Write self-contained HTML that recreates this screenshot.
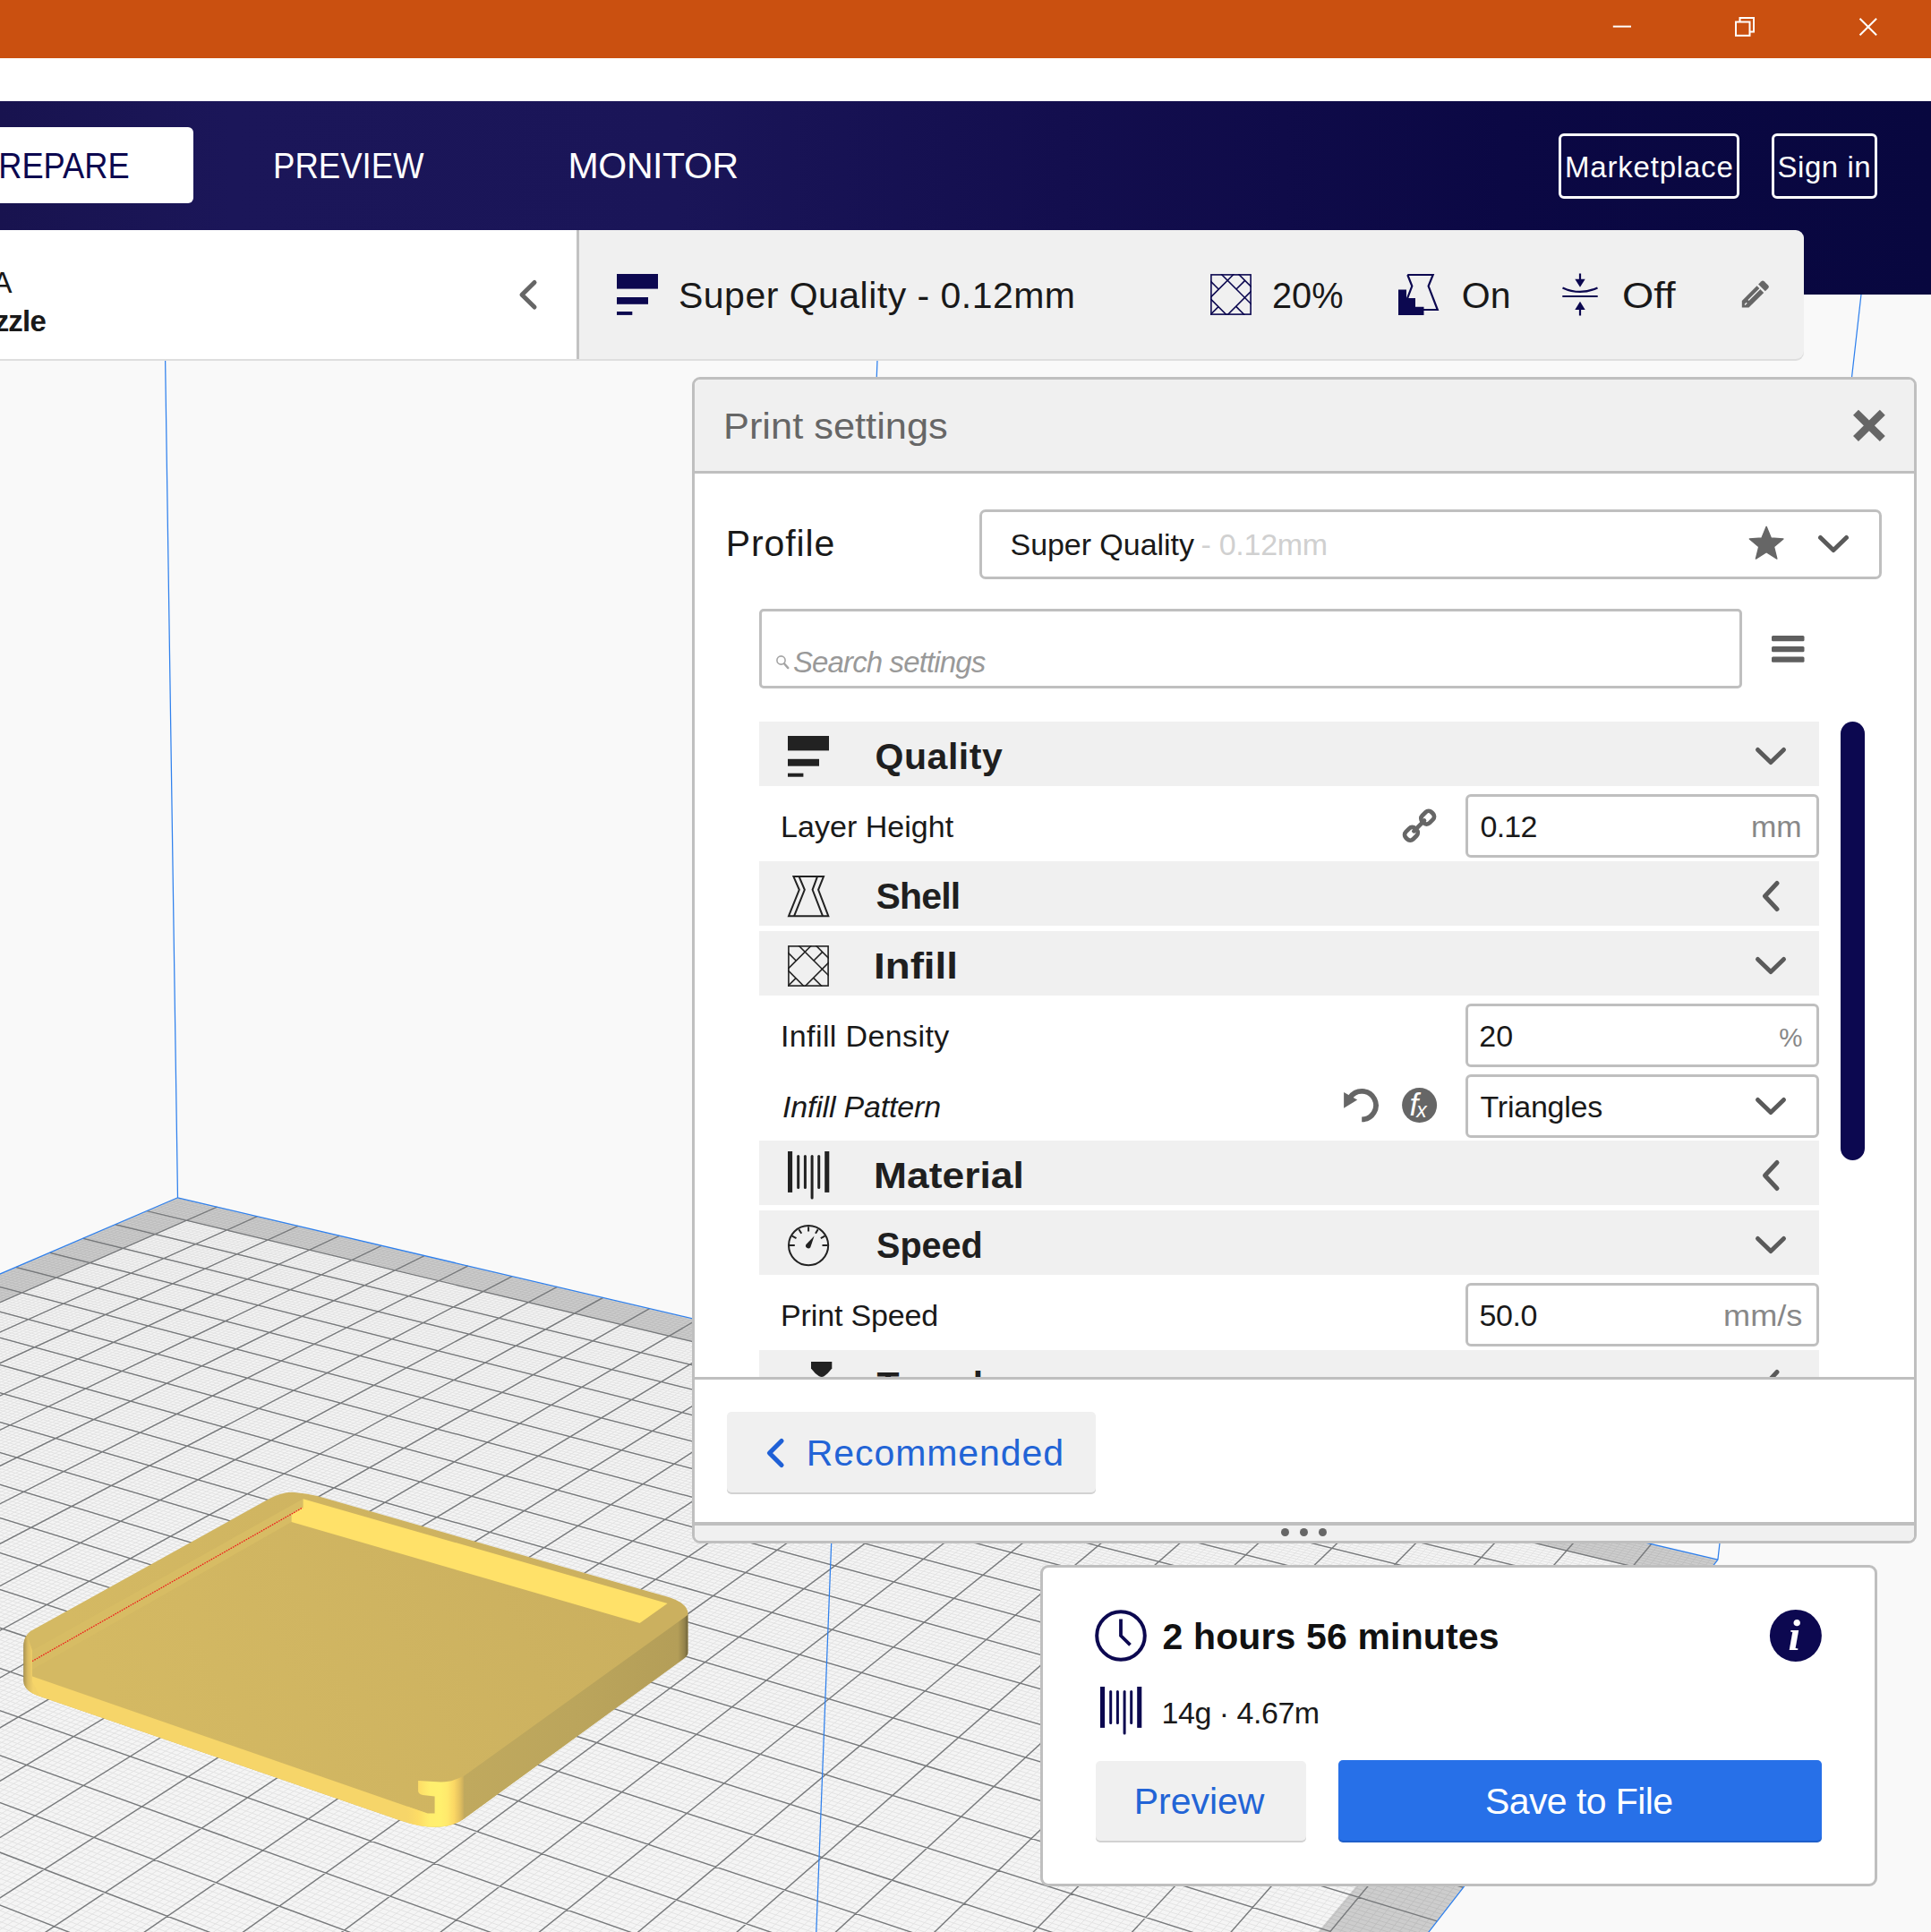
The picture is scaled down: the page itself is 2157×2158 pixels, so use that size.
<!DOCTYPE html>
<html><head><meta charset="utf-8"><title>Cura</title>
<style>html,body{margin:0;padding:0}body{width:2157px;height:2158px;position:relative;overflow:hidden;background:#f9f9f9;font-family:"Liberation Sans",sans-serif}svg{display:block;overflow:visible}</style></head>
<body>
<svg id="scene" width="2157" height="2158" viewBox="0 0 2157 2158" style="position:absolute;left:0;top:0">
<rect x="0" y="0" width="2157" height="2158" fill="#f9f9f9"/>
<polygon points="198.5,1337.8 1918.9,1742.1 873.5,3088.4 -1342,1999.5" fill="#f5f5f5"/>
<path d="M202.9 1338.8L-5 1428.4M195.1 1339.3L1916.9 1744.7M207.3 1339.9L-5 1431.5M191.7 1340.8L1915 1747.2M211.7 1340.9L-5 1434.6M188.3 1342.2L1913 1749.7M216.1 1341.9L-5 1437.8M184.8 1343.7L1911 1752.3M220.5 1343L-5 1440.9M181.4 1345.2L1909 1754.8M224.9 1344L-5 1444.1M177.9 1346.7L1907 1757.4M229.3 1345.1L-5 1447.3M174.5 1348.2L1905.1 1759.9M233.8 1346.1L-5 1450.5M171 1349.7L1903.1 1762.5M238.2 1347.1L-5 1453.7M167.5 1351.1L1901.1 1765.1M247.1 1349.2L-5 1460.2M160.5 1354.1L1897 1770.3M251.5 1350.3L-5 1463.5M157 1355.7L1895 1772.9M256 1351.3L-5 1466.8M153.5 1357.2L1893 1775.5M260.5 1352.4L-5 1470.1M150 1358.7L1891 1778.1M265 1353.4L-5 1473.4M146.5 1360.2L1888.9 1780.7M269.4 1354.5L-5 1476.7M142.9 1361.7L1886.9 1783.3M273.9 1355.5L-5 1480M139.4 1363.2L1884.8 1786M278.4 1356.6L-5 1483.4M135.9 1364.7L1882.8 1788.6M282.9 1357.7L-5 1486.8M132.3 1366.3L1880.7 1791.3M292 1359.8L-5 1493.6M125.2 1369.3L1876.6 1796.6M296.5 1360.8L-5 1497M121.6 1370.9L1874.5 1799.3M301 1361.9L-5 1500.4M118 1372.4L1872.4 1802M305.6 1363L-5 1503.9M114.4 1374L1870.3 1804.7M310.1 1364L-5 1507.3M110.8 1375.5L1868.2 1807.4M314.7 1365.1L-5 1510.8M107.2 1377.1L1866.1 1810.1M319.2 1366.2L-5 1514.3M103.5 1378.6L1864 1812.8M323.8 1367.3L-5 1517.8M99.9 1380.2L1861.9 1815.6M328.4 1368.3L-5 1521.4M96.3 1381.8L1859.7 1818.3M337.6 1370.5L-5 1528.5M89 1384.9L1855.5 1823.8M342.2 1371.6L-5 1532.1M85.3 1386.5L1853.3 1826.6M346.8 1372.7L-5 1535.7M81.6 1388L1851.2 1829.3M351.4 1373.7L-5 1539.3M77.9 1389.6L1849 1832.1M356 1374.8L-5 1542.9M74.2 1391.2L1846.8 1834.9M360.6 1375.9L-5 1546.6M70.5 1392.8L1844.7 1837.7M365.3 1377L-5 1550.3M66.8 1394.4L1842.5 1840.5M369.9 1378.1L-5 1554M63.1 1396L1840.3 1843.3M374.6 1379.2L-5 1557.7M59.4 1397.6L1838.1 1846.1M383.9 1381.4L-5 1565.1M51.9 1400.8L1833.7 1851.8M388.6 1382.5L-5 1568.9M48.2 1402.4L1831.5 1854.7M393.3 1383.6L-5 1572.7M44.4 1404L1829.3 1857.5M398 1384.7L-5 1576.5M40.6 1405.7L1827 1860.4M402.7 1385.8L-5 1580.3M36.8 1407.3L1824.8 1863.3M407.4 1386.9L-5 1584.1M33.1 1408.9L1822.6 1866.2M412.1 1388L-5 1588M29.3 1410.5L1820.3 1869.1M416.8 1389.1L-5 1591.9M25.4 1412.2L1818.1 1872M421.5 1390.2L-5 1595.8M21.6 1413.8L1815.8 1874.9M431 1392.5L-5 1603.6M14 1417.1L1811.3 1880.7M435.8 1393.6L-5 1607.6M10.1 1418.8L1809 1883.7M440.5 1394.7L-5 1611.6M6.3 1420.4L1806.7 1886.6M445.3 1395.8L-5 1615.5M2.4 1422.1L1804.4 1889.6M450.1 1396.9L-5 1619.6M-1.5 1423.7L1802.1 1892.6M454.9 1398.1L-5 1623.6M-5 1425.5L1799.8 1895.5M459.7 1399.2L-5 1627.7M-5 1428.2L1797.4 1898.5M464.5 1400.3L-5 1631.7M-5 1430.9L1795.1 1901.5M469.3 1401.4L-5 1635.8M-5 1433.6L1792.8 1904.5M478.9 1403.7L-5 1644.1M-5 1439L1788.1 1910.6M483.7 1404.8L-5 1648.2M-5 1441.7L1785.7 1913.6M488.6 1406L-5 1652.4M-5 1444.5L1783.4 1916.7M493.4 1407.1L-5 1656.6M-5 1447.3L1781 1919.7M498.3 1408.3L-5 1660.9M-5 1450L1778.6 1922.8M503.2 1409.4L-5 1665.1M-5 1452.8L1776.2 1925.9M508 1410.6L-5 1669.4M-5 1455.6L1773.8 1928.9M512.9 1411.7L-5 1673.7M-5 1458.4L1771.4 1932M517.8 1412.9L-5 1678M-5 1461.2L1769 1935.2M527.6 1415.2L-5 1686.7M-5 1466.9L1764.2 1941.4M532.5 1416.3L-5 1691.1M-5 1469.7L1761.7 1944.5M537.4 1417.5L-5 1695.5M-5 1472.6L1759.3 1947.7M542.4 1418.6L-5 1699.9M-5 1475.4L1756.8 1950.8M547.3 1419.8L-5 1704.4M-5 1478.3L1754.4 1954M552.3 1421L-5 1708.8M-5 1481.2L1751.9 1957.2M557.2 1422.1L-5 1713.3M-5 1484.1L1749.4 1960.4M562.2 1423.3L-5 1717.9M-5 1487L1746.9 1963.6M567.1 1424.5L-5 1722.4M-5 1490L1744.4 1966.8M577.1 1426.8L-5 1731.6M-5 1495.9L1739.4 1973.2M582.1 1428L-5 1736.2M-5 1498.8L1736.9 1976.5M587.1 1429.1L-5 1740.9M-5 1501.8L1734.4 1979.7M592.1 1430.3L-5 1745.6M-5 1504.8L1731.8 1983M597.2 1431.5L-5 1750.3M-5 1507.8L1729.3 1986.3M602.2 1432.7L-5 1755M-5 1510.8L1726.8 1989.6M607.2 1433.9L-5 1759.7M-5 1513.8L1724.2 1992.9M612.3 1435.1L-5 1764.5M-5 1516.9L1721.6 1996.2M617.3 1436.2L-5 1769.3M-5 1519.9L1719 1999.5M627.5 1438.6L-5 1779M-5 1526L1713.9 2006.2M632.6 1439.8L-5 1783.9M-5 1529.1L1711.3 2009.5M637.6 1441L-5 1788.8M-5 1532.2L1708.6 2012.9M642.7 1442.2L-5 1793.8M-5 1535.3L1706 2016.3M647.9 1443.4L-5 1798.7M-5 1538.5L1703.4 2019.6M653 1444.6L-5 1803.7M-5 1541.6L1700.8 2023M658.1 1445.8L-5 1808.8M-5 1544.8L1698.1 2026.5M663.2 1447L-5 1813.8M-5 1547.9L1695.5 2029.9M668.4 1448.2L-5 1818.9M-5 1551.1L1692.8 2033.3M678.7 1450.7L-5 1829.2M-5 1557.5L1687.4 2040.2M683.9 1451.9L-5 1834.3M-5 1560.7L1684.7 2043.7M689 1453.1L-5 1839.5M-5 1563.9L1682 2047.2M694.2 1454.3L-5 1844.8M-5 1567.2L1679.3 2050.7M699.4 1455.5L-5 1850M-5 1570.4L1676.6 2054.2M704.6 1456.8L-5 1855.3M-5 1573.7L1673.9 2057.7M709.9 1458L-5 1860.6M-5 1577L1671.1 2061.2M715.1 1459.2L-5 1866M-5 1580.3L1668.4 2064.8M720.3 1460.5L-5 1871.4M-5 1583.6L1665.6 2068.3M730.8 1462.9L-5 1882.3M-5 1590.3L1660.1 2075.5M736.1 1464.2L-5 1887.7M-5 1593.7L1657.3 2079.1M741.3 1465.4L-5 1893.2M-5 1597L1654.5 2082.7M746.6 1466.6L-5 1898.8M-5 1600.4L1651.7 2086.3M751.9 1467.9L-5 1904.4M-5 1603.8L1648.8 2089.9M757.2 1469.1L-5 1910M-5 1607.2L1646 2093.5M762.5 1470.4L-5 1915.6M-5 1610.7L1643.2 2097.2M767.8 1471.6L-5 1921.3M-5 1614.1L1640.3 2100.9M773.2 1472.9L-5 1927M-5 1617.6L1637.5 2104.6M783.8 1475.4L-5 1938.6M-5 1624.5L1631.7 2112M789.2 1476.6L-5 1944.4M-5 1628L1628.8 2115.7M794.6 1477.9L-5 1950.3M-5 1631.6L1625.9 2119.4M799.9 1479.2L-5 1956.1M-5 1635.1L1623 2123.2M805.3 1480.4L-5 1962.1M-5 1638.7L1620.1 2126.9M810.7 1481.7L-5 1968M-5 1642.2L1617.2 2130.7M816.1 1483L-5 1974M-5 1645.8L1614.2 2134.5M821.5 1484.2L-5 1980.1M-5 1649.4L1611.3 2138.3M826.9 1485.5L-5 1986.2M-5 1653L1608.3 2142.1M837.8 1488.1L-5 1998.4M-5 1660.3L1602.3 2149.8M843.2 1489.3L-5 2004.6M-5 1664L1599.3 2153.6M848.7 1490.6L-5 2010.9M-5 1667.7L1596.3 2157.5M854.2 1491.9L-5 2017.1M-5 1671.4L1593.3 2161.4M859.6 1493.2L-5 2023.4M-5 1675.1L1582.8 2163M865.1 1494.5L-5 2029.8M-5 1678.8L1567.1 2163M870.6 1495.8L-5 2036.2M-5 1682.6L1551.3 2163M876.1 1497.1L-5 2042.6M-5 1686.3L1535.6 2163M881.7 1498.4L-5 2049.1M-5 1690.1L1519.9 2163M892.7 1501L-5 2062.2M-5 1697.7L1488.4 2163M898.3 1502.3L-5 2068.8M-5 1701.6L1472.7 2163M903.8 1503.6L-5 2075.4M-5 1705.4L1456.9 2163M909.4 1504.9L-5 2082.1M-5 1709.3L1441.2 2163M915 1506.2L-5 2088.8M-5 1713.2L1425.5 2163M920.5 1507.5L-5 2095.6M-5 1717.1L1409.7 2163M926.1 1508.8L-5 2102.4M-5 1721L1394 2163M931.7 1510.1L-5 2109.3M-5 1725L1378.3 2163M937.4 1511.5L-5 2116.2M-5 1728.9L1362.6 2163M948.6 1514.1L-5 2130.2M-5 1736.9L1331.1 2163M954.3 1515.4L-5 2137.2M-5 1741L1315.4 2163M959.9 1516.8L-5 2144.3M-5 1745L1299.6 2163M965.6 1518.1L-5 2151.5M-5 1749L1283.9 2163M971.3 1519.4L-5 2158.7M-5 1753.1L1268.2 2163M976.9 1520.8L-0.5 2163M-5 1757.2L1252.4 2163M982.6 1522.1L10.5 2163M-5 1761.3L1236.7 2163M988.4 1523.4L21.6 2163M-5 1765.5L1221 2163M994.1 1524.8L32.6 2163M-5 1769.6L1205.3 2163M1005.5 1527.5L54.7 2163M-5 1778L1173.8 2163M1011.3 1528.8L65.8 2163M-5 1782.2L1158.1 2163M1017 1530.2L76.8 2163M-5 1786.5L1142.4 2163M1022.8 1531.5L87.9 2163M-5 1790.7L1126.6 2163M1028.6 1532.9L98.9 2163M-5 1795L1110.9 2163M1034.4 1534.3L110 2163M-5 1799.3L1095.2 2163M1040.2 1535.6L121 2163M-5 1803.6L1079.5 2163M1046 1537L132.1 2163M-5 1807.9L1063.7 2163M1051.8 1538.4L143.1 2163M-5 1812.3L1048 2163M1063.5 1541.1L165.2 2163M-5 1821.1L1016.6 2163M1069.3 1542.5L176.3 2163M-5 1825.5L1000.8 2163M1075.2 1543.9L187.3 2163M-5 1830L985.1 2163M1081.1 1545.2L198.4 2163M-5 1834.4L969.4 2163M1087 1546.6L209.4 2163M-5 1838.9L953.7 2163M1092.9 1548L220.5 2163M-5 1843.5L937.9 2163M1098.8 1549.4L231.5 2163M-5 1848L922.2 2163M1104.7 1550.8L242.6 2163M-5 1852.6L906.5 2163M1110.6 1552.2L253.6 2163M-5 1857.1L890.8 2163M1122.5 1555L275.7 2163M-5 1866.4L859.3 2163M1128.5 1556.4L286.8 2163M-5 1871L843.6 2163M1134.5 1557.8L297.9 2163M-5 1875.7L827.9 2163M1140.4 1559.2L308.9 2163M-5 1880.4L812.2 2163M1146.4 1560.6L320 2163M-5 1885.1L796.5 2163M1152.4 1562L331 2163M-5 1889.9L780.7 2163M1158.5 1563.4L342.1 2163M-5 1894.7L765 2163M1164.5 1564.8L353.1 2163M-5 1899.5L749.3 2163M1170.5 1566.3L364.2 2163M-5 1904.3L733.6 2163M1182.7 1569.1L386.3 2163M-5 1914L702.1 2163M1188.7 1570.5L397.3 2163M-5 1918.9L686.4 2163M1194.8 1572L408.4 2163M-5 1923.8L670.7 2163M1200.9 1573.4L419.4 2163M-5 1928.8L655 2163M1207 1574.8L430.5 2163M-5 1933.8L639.3 2163M1213.1 1576.3L441.6 2163M-5 1938.8L623.6 2163M1219.3 1577.7L452.6 2163M-5 1943.8L607.8 2163M1225.4 1579.2L463.7 2163M-5 1948.8L592.1 2163M1231.6 1580.6L474.7 2163M-5 1953.9L576.4 2163M1243.9 1583.5L496.8 2163M-5 1964.2L545 2163M1250.1 1585L507.9 2163M-5 1969.3L529.3 2163M1256.3 1586.4L518.9 2163M-5 1974.5L513.6 2163M1262.5 1587.9L530 2163M-5 1979.7L497.8 2163M1268.7 1589.3L541.1 2163M-5 1985L482.1 2163M1275 1590.8L552.1 2163M-5 1990.3L466.4 2163M1281.2 1592.3L563.2 2163M-5 1995.6L450.7 2163M1287.5 1593.8L574.2 2163M-5 2000.9L435 2163M1293.8 1595.2L585.3 2163M-5 2006.3L419.3 2163M1306.3 1598.2L607.4 2163M-5 2017.1L387.8 2163M1312.6 1599.7L618.5 2163M-5 2022.5L372.1 2163M1319 1601.2L629.5 2163M-5 2028L356.4 2163M1325.3 1602.6L640.6 2163M-5 2033.5L340.7 2163M1331.6 1604.1L651.6 2163M-5 2039.1L325 2163M1338 1605.6L662.7 2163M-5 2044.6L309.3 2163M1344.4 1607.1L673.8 2163M-5 2050.2L293.6 2163M1350.7 1608.6L684.8 2163M-5 2055.9L277.9 2163M1357.1 1610.1L695.9 2163M-5 2061.5L262.2 2163M1369.9 1613.1L718 2163M-5 2073L230.7 2163M1376.4 1614.6L729 2163M-5 2078.7L215 2163M1382.8 1616.2L740.1 2163M-5 2084.5L199.3 2163M1389.3 1617.7L751.2 2163M-5 2090.3L183.6 2163M1395.7 1619.2L762.2 2163M-5 2096.2L167.9 2163M1402.2 1620.7L773.3 2163M-5 2102.1L152.2 2163M1408.7 1622.2L784.3 2163M-5 2108L136.5 2163M1415.2 1623.8L795.4 2163M-5 2114L120.8 2163M1421.7 1625.3L806.5 2163M-5 2120L105.1 2163M1434.8 1628.4L828.6 2163M-5 2132.1L73.7 2163M1441.3 1629.9L839.6 2163M-5 2138.2L58 2163M1447.9 1631.5L850.7 2163M-5 2144.3L42.2 2163M1454.5 1633L861.8 2163M-5 2150.5L26.5 2163M1461.1 1634.6L872.8 2163M-5 2156.7L10.8 2163M1467.7 1636.1L883.9 2163M-5 2162.9L-4.9 2163M1474.3 1637.7L894.9 2163M1480.9 1639.2L906 2163M1487.6 1640.8L917.1 2163M1500.9 1643.9L939.2 2163M1507.6 1645.5L950.3 2163M1514.3 1647.1L961.3 2163M1521 1648.6L972.4 2163M1527.7 1650.2L983.4 2163M1534.4 1651.8L994.5 2163M1541.2 1653.4L1005.6 2163M1548 1655L1016.6 2163M1554.7 1656.6L1027.7 2163M1568.3 1659.8L1049.8 2163M1575.1 1661.4L1060.9 2163M1582 1663L1071.9 2163M1588.8 1664.6L1083 2163M1595.7 1666.2L1094.1 2163M1602.5 1667.8L1105.1 2163M1609.4 1669.4L1116.2 2163M1616.3 1671L1127.3 2163M1623.2 1672.7L1138.3 2163M1637.1 1675.9L1160.5 2163M1644 1677.6L1171.5 2163M1651 1679.2L1182.6 2163M1658 1680.8L1193.6 2163M1665 1682.5L1204.7 2163M1672 1684.1L1215.8 2163M1679 1685.8L1226.8 2163M1686 1687.4L1237.9 2163M1693.1 1689.1L1249 2163M1707.2 1692.4L1271.1 2163M1714.3 1694.1L1282.2 2163M1721.4 1695.7L1293.2 2163M1728.5 1697.4L1304.3 2163M1735.7 1699.1L1315.4 2163M1742.8 1700.8L1326.4 2163M1750 1702.5L1337.5 2163M1757.2 1704.1L1348.6 2163M1764.4 1705.8L1359.6 2163M1778.8 1709.2L1381.8 2163M1786 1710.9L1392.8 2163M1793.3 1712.6L1403.9 2163M1800.6 1714.3L1415 2163M1807.8 1716.1L1426 2163M1815.1 1717.8L1437.1 2163M1822.4 1719.5L1448.2 2163M1829.8 1721.2L1459.2 2163M1837.1 1722.9L1470.3 2163M1851.8 1726.4L1492.5 2163M1859.2 1728.1L1503.5 2163M1866.6 1729.9L1514.6 2163M1874 1731.6L1525.7 2163M1881.5 1733.4L1536.7 2163M1888.9 1735.1L1547.8 2163M1896.4 1736.9L1558.9 2163M1903.9 1738.6L1569.9 2163M1911.4 1740.4L1581 2163" stroke="#e3e3e3" stroke-width="1" fill="none"/>
<path d="M198.5 1337.8 L1918.9 1742.1 L873.5 3088.4 L-1342 1999.5 Z M208.4 1363.2 L1814.8 1747.5 L810.1 2951.5 L-1217.9 1989.7 Z" fill="#000" fill-opacity="0.16" fill-rule="evenodd"/>
<path d="M242.6 1348.2L-5 1457M164 1352.6L1899.1 1767.7M287.4 1358.7L-5 1490.2M128.7 1367.8L1878.6 1794M333 1369.4L-5 1524.9M92.6 1383.3L1857.6 1821M379.2 1380.3L-5 1561.4M55.6 1399.2L1835.9 1849M426.3 1391.3L-5 1599.7M17.8 1415.5L1813.5 1877.8M474.1 1402.6L-5 1639.9M-5 1436.3L1790.4 1907.5M522.7 1414L-5 1682.3M-5 1464L1766.6 1938.3M572.1 1425.6L-5 1727M-5 1492.9L1741.9 1970M622.4 1437.4L-5 1774.2M-5 1523L1716.5 2002.8M673.5 1449.5L-5 1824M-5 1554.3L1690.1 2036.8M725.6 1461.7L-5 1876.8M-5 1587L1662.8 2071.9M778.5 1474.1L-5 1932.8M-5 1621L1634.6 2108.3M832.4 1486.8L-5 1992.3M-5 1656.7L1605.3 2145.9M887.2 1499.7L-5 2055.6M-5 1693.9L1504.1 2163M943 1512.8L-5 2123.2M-5 1732.9L1346.8 2163M999.8 1526.1L43.7 2163M-5 1773.8L1189.5 2163M1057.7 1539.7L154.2 2163M-5 1816.7L1032.3 2163M1116.6 1553.6L264.7 2163M-5 1861.7L875.1 2163M1176.6 1567.7L375.2 2163M-5 1909.1L717.9 2163M1237.7 1582.1L485.8 2163M-5 1959L560.7 2163M1300 1596.7L596.3 2163M-5 2011.7L403.6 2163M1363.5 1611.6L706.9 2163M-5 2067.2L246.4 2163M1428.3 1626.8L817.5 2163M-5 2126L89.4 2163M1494.2 1642.3L928.1 2163M1561.5 1658.2L1038.8 2163M1630.1 1674.3L1149.4 2163M1700.1 1690.7L1260 2163M1771.6 1707.5L1370.7 2163M1844.5 1724.7L1481.4 2163" stroke="#787a7c" stroke-width="1.45" fill="none"/>
<path d="M198.5 1337.8L1918.9 1742.1M1918.9 1742.1L1592.1 2163M-5 1425.2L198.5 1337.8M198.5 1337.8L183.4 320M983.2 320L911.6 2163M1918.9 1742.1L2080 320" stroke="#2f80ed" stroke-width="1.25" fill="none"/>

<defs>
<linearGradient id="gcyl" gradientUnits="userSpaceOnUse" x1="455" y1="0" x2="518" y2="0">
<stop offset="0" stop-color="#f6d569"/><stop offset="0.19" stop-color="#fddc66"/><stop offset="0.40" stop-color="#ffee6e"/><stop offset="0.59" stop-color="#fff06e"/><stop offset="0.71" stop-color="#ffe96c"/><stop offset="0.83" stop-color="#fbd764"/><stop offset="0.92" stop-color="#e6c360"/><stop offset="1" stop-color="#c9ad5d"/>
</linearGradient>
<linearGradient id="gleft" gradientUnits="userSpaceOnUse" x1="26" y1="0" x2="37" y2="0">
<stop offset="0" stop-color="#7f7040"/><stop offset="0.12" stop-color="#b59c55"/><stop offset="0.45" stop-color="#d9bb62"/><stop offset="1" stop-color="#f2d169"/>
</linearGradient>
<linearGradient id="gright" gradientUnits="userSpaceOnUse" x1="518" y1="0" x2="768.4" y2="0">
<stop offset="0" stop-color="#c0a95e"/><stop offset="0.5" stop-color="#bba55c"/><stop offset="0.955" stop-color="#b49e58"/><stop offset="0.985" stop-color="#94834b"/><stop offset="1" stop-color="#6f643c"/>
</linearGradient>
<linearGradient id="gtop" gradientUnits="userSpaceOnUse" x1="150" y1="1950" x2="650" y2="1700">
<stop offset="0" stop-color="#d4b963"/><stop offset="1" stop-color="#cbb05f"/>
</linearGradient>
</defs>
<!-- silhouette / top surfaces -->
<path d="M26.4 1838 Q26.4 1828 34 1822.1 L300 1674.6 Q316 1665.8 329 1667 Q342 1668 354.6 1671.1 L743.6 1783.1 Q767 1789.5 768.4 1801.3 L768.4 1846.1 Q768.4 1849.5 764 1852.5 L517.9 2031.8 Q505 2040.8 485.3 2040.8 Q470 2040.5 449 2034 L45 1894.9 Q26.8 1889 26.4 1878 Z" fill="url(#gtop)"/>
<!-- lighter band along left lip inner wall -->
<polygon points="36,1843.6 338.6,1674.2 338.6,1683.5 325.6,1691.8 325.6,1700.1 27.8,1869.5 36,1862" fill="#d7bc64"/>
<!-- lip inner wall back-right (bright) -->
<polygon points="338.6,1674.2 745.6,1791 714.6,1812.9 325.6,1700.1 325.6,1691.8 338.6,1683.5" fill="#ffe169"/>
<!-- red dotted line -->
<line x1="36" y1="1855.5" x2="338.1" y2="1684" stroke="#f01818" stroke-width="1.3" stroke-dasharray="1.6 1.2"/>
<!-- front-left bright face -->
<path d="M29 1870 L477.3 2025.6 L477.3 2040 Q465 2039 449 2034 L45 1894.9 Q28 1889 27 1880 Z" fill="#f6d569"/>
<path d="M467.1 1989 L492.5 1990.5 Q502 1990.3 507 1988.3 L517.9 1983.9 L517.9 2031.8 Q505 2040.8 485.3 2040.8 Q470 2040.5 455 2036 L455 2017.8 L477.3 2025.6 L485.6 2025.6 L485.6 2006.4 L472.2 2005 Q467.1 2004 467.1 2000.6 Z" fill="url(#gcyl)"/>
<!-- left end strip -->
<path d="M26.4 1838 Q26.4 1831 30.4 1826 L36 1843.6 L36 1878 L45 1894.9 Q26.8 1889 26.4 1878 Z" fill="url(#gleft)"/>
<!-- right face -->
<path d="M517.9 1983.9 L768.4 1803.8 L768.4 1846.1 Q768.4 1849.5 764 1852.5 L517.9 2031.8 Z" fill="url(#gright)"/>

</svg>
<div style="position:absolute;left:0px;top:0px;width:2157px;height:65px;box-sizing:border-box;background:#ca5010;"></div>
<div style="position:absolute;left:0px;top:65px;width:2157px;height:48px;box-sizing:border-box;background:#fff;"></div>
<svg style="position:absolute;left:1790px;top:10px;" width="330" height="45" viewBox="0 0 330 45"><g stroke="#fff" stroke-width="2" fill="none"><path d="M11.8 19.6H32"/><path d="M149 14.6h15.5v15.2H149z"/><path d="M153.5 14.6V10H169v15.5h-4.5"/><path d="M287.5 10.8l18.6 18.4M306.1 10.8l-18.6 18.4"/></g></svg>
<div style="position:absolute;left:0px;top:113px;width:2157px;height:215.5px;box-sizing:border-box;background:linear-gradient(90deg,#18134f 0%,#1b1659 12%,#1a1558 35%,#130e4e 55%,#0b0844 78%,#08073f 100%);"></div>
<div style="position:absolute;left:-20px;top:142px;width:236px;height:85px;box-sizing:border-box;background:#fff;border-radius:6px;"></div>
<div style="position:absolute;left:-26.0px;top:165.3px;font-size:41px;line-height:41px;color:#0c0850;white-space:pre;transform:scaleX(0.8850);transform-origin:0 0;">PREPARE</div>
<div style="position:absolute;left:305.3px;top:165.3px;font-size:41px;line-height:41px;color:#fff;white-space:pre;transform:scaleX(0.8914);transform-origin:0 0;">PREVIEW</div>
<div style="position:absolute;left:634.6px;top:165.3px;font-size:41px;line-height:41px;color:#fff;white-space:pre;letter-spacing:-0.38px;">MONITOR</div>
<div style="position:absolute;left:1741px;top:149px;width:202px;height:72.5px;box-sizing:border-box;border:3px solid #fff;border-radius:6px;"></div>
<div style="position:absolute;left:1748.0px;top:169.7px;font-size:33px;line-height:33px;color:#fff;white-space:pre;letter-spacing:0.80px;">Marketplace</div>
<div style="position:absolute;left:1979px;top:149px;width:118px;height:72.5px;box-sizing:border-box;border:3px solid #fff;border-radius:6px;"></div>
<div style="position:absolute;left:1985.6px;top:169.7px;font-size:33px;line-height:33px;color:#fff;white-space:pre;letter-spacing:0.52px;">Sign in</div>
<div style="position:absolute;left:0px;top:257px;width:647px;height:144px;box-sizing:border-box;background:#fff;box-shadow:0 2px 0 #dedede;"></div>
<div style="position:absolute;left:644px;top:257px;width:3px;height:144px;box-sizing:border-box;background:#c2c2c2;"></div>
<div style="position:absolute;left:647px;top:257px;width:1368px;height:144px;box-sizing:border-box;background:#f0f0f0;border-radius:0 9px 9px 0;box-shadow:0 2px 0 #dedede;"></div>
<div style="position:absolute;left:-173.7px;top:298.9px;font-size:33px;line-height:33px;color:#191919;white-space:pre;">Generic PLA</div>
<div style="position:absolute;left:-157.7px;top:342.0px;font-size:33px;line-height:33px;color:#191919;white-space:pre;font-weight:700;letter-spacing:-0.80px;">0.4mm Nozzle</div>
<svg style="position:absolute;left:575px;top:308px;" width="30" height="44" viewBox="0 0 30 44"><path d="M22 7.5L8 21.3 22 35" stroke="#666" stroke-width="5" fill="none" stroke-linecap="round" stroke-linejoin="round"/></svg>
<svg style="position:absolute;left:689px;top:306px;" width="46" height="46" viewBox="0 0 46 46"><g fill="#0c0850"><rect x="0" y="0" width="46" height="16.6"/><rect x="0" y="26" width="35" height="7.8"/><rect x="0" y="42" width="17.3" height="3.9"/></g></svg>
<div style="position:absolute;left:758.0px;top:310.2px;font-size:41px;line-height:41px;color:#191919;white-space:pre;letter-spacing:0.48px;">Super Quality - 0.12mm</div>
<svg style="position:absolute;left:1352px;top:306px;overflow:hidden;" width="46" height="46" viewBox="0 0 46 46"><g stroke="#0c0850" stroke-width="1.6" fill="none"><rect x="0.9" y="0.9" width="44.2" height="44.2"/><path d="M11.96 0L46 34.04"/><path d="M31.28 0L46 14.72"/><path d="M0 7.82L9.43 17.25"/><path d="M0 27.6L18.4 46"/><path d="M28.75 36.34L38.41 46"/><path d="M26.45 0L0 26.45"/><path d="M38.64 7.36L28.75 17.25"/><path d="M46 18.86L18.86 46"/><path d="M8.97 36.57L0 45.54"/></g></svg>
<div style="position:absolute;left:1421.1px;top:310.2px;font-size:41px;line-height:41px;color:#191919;white-space:pre;transform:scaleX(0.9684);transform-origin:0 0;">20%</div>
<svg style="position:absolute;left:1560px;top:304px;" width="50" height="50" viewBox="0 0 50 50"><path d="M12.3 3h28.4L35.6 15.6 45.8 42H11" stroke="#0c0850" stroke-width="2.2" fill="none"/><path d="M12.3 3l5 12.6L11 32" stroke="#0c0850" stroke-width="2.2" fill="none"/><path d="M2 19.5h9v9.5h10v9.8h9.5V48H2z" fill="#0c0850"/></svg>
<div style="position:absolute;left:1632.8px;top:310.2px;font-size:41px;line-height:41px;color:#191919;white-space:pre;">On</div>
<svg style="position:absolute;left:1743px;top:304px;" width="44" height="50" viewBox="0 0 44 50"><g stroke="#0c0850" stroke-width="2.2" fill="none"><path d="M2.3 27h39.4"/><path d="M2.5 17.4Q22 26.5 41.5 17.4"/><path d="M22 1.6v8M22 48.5v-8"/></g><path d="M16.3 7.8h11.4L22 16.8zM16.3 42h11.4L22 32.8z" fill="#0c0850"/></svg>
<div style="position:absolute;left:1811.8px;top:310.2px;font-size:41px;line-height:41px;color:#191919;white-space:pre;transform:scaleX(1.1058);transform-origin:0 0;">Off</div>
<svg style="position:absolute;left:1943px;top:311px;" width="36" height="36" viewBox="0 0 36 36"><g fill="#666"><path d="M24.5 3.2a2.2 2.2 0 0 1 3.1 0l4.6 4.6a2.2 2.2 0 0 1 0 3.1l-3.4 3.4-7.7-7.7z"/><path d="M19.5 8.2l7.7 7.7L10.5 32.6H2.8v-7.7z"/></g><path d="M6 29.4l2.2-2.2M10 24.5L23.3 11.2" stroke="#f0f0f0" stroke-width="1.4"/><path d="M3.6 27.5l4.4 4.4" stroke="#f0f0f0" stroke-width="0"/></svg>
<div style="position:absolute;left:773px;top:421px;width:1368px;height:1303px;box-sizing:border-box;background:#fff;border:3px solid #bfbfbf;border-radius:9px;"></div>
<div style="position:absolute;left:776px;top:424px;width:1362px;height:102px;box-sizing:border-box;background:#f0f0f0;border-radius:6px 6px 0 0;"></div>
<div style="position:absolute;left:776px;top:526px;width:1362px;height:3px;box-sizing:border-box;background:#bfbfbf;"></div>
<div style="position:absolute;left:807.6px;top:455.9px;font-size:41px;line-height:41px;color:#666;white-space:pre;transform:scaleX(1.0579);transform-origin:0 0;">Print settings</div>
<svg style="position:absolute;left:2066px;top:453px;" width="44" height="44" viewBox="0 0 44 44"><path d="M7 7.8l29.8 29.2M36.8 7.8L7 37" stroke="#666" stroke-width="8.5" fill="none"/></svg>
<div style="position:absolute;left:810.7px;top:587.2px;font-size:41px;line-height:41px;color:#191919;white-space:pre;letter-spacing:0.90px;">Profile</div>
<div style="position:absolute;left:1094px;top:568.5px;width:1007.5px;height:78px;box-sizing:border-box;background:#fff;border:3px solid #bfbfbf;border-radius:7px;"></div>
<div style="position:absolute;left:1128.5px;top:591.2px;font-size:34px;line-height:34px;color:#191919;white-space:pre;letter-spacing:-0.05px;">Super Quality</div>
<div style="position:absolute;left:1341.5px;top:591.2px;font-size:34px;line-height:34px;color:#d0d0d0;white-space:pre;letter-spacing:-0.27px;">- 0.12mm</div>
<svg style="position:absolute;left:1951.5px;top:585.5px;" width="43" height="41" viewBox="0 0 46 44"><path d="M22.6 2.5l5.6 13.6 14.6 1-11.2 9.5 3.6 14.3-12.6-7.9-12.6 7.9 3.6-14.3L2.4 17.1l14.6-1z" fill="#666" stroke="#666" stroke-width="1.5" stroke-linejoin="round"/></svg>
<svg style="position:absolute;left:2028.2px;top:595px;" width="40" height="26" viewBox="0 0 40 26"><path d="M5.5 5.5L20 19.5 34.5 5.5" stroke="#5a5a5a" stroke-width="5" fill="none" stroke-linecap="round" stroke-linejoin="round"/></svg>
<div style="position:absolute;left:848px;top:680px;width:1098px;height:89px;box-sizing:border-box;background:#fff;border:3px solid #bfbfbf;border-radius:5px;"></div>
<svg style="position:absolute;left:866px;top:730px;" width="18" height="20" viewBox="0 0 18 20"><circle cx="6.5" cy="7.5" r="4.6" stroke="#a4a4a4" stroke-width="1.6" fill="none"/><path d="M10 11.3l4.3 4.8" stroke="#a4a4a4" stroke-width="2.4" stroke-linecap="round"/></svg>
<div style="position:absolute;left:885.9px;top:723.1px;font-size:33px;line-height:33px;color:#999;white-space:pre;font-style:italic;letter-spacing:-0.86px;">Search settings</div>
<svg style="position:absolute;left:1978px;top:708px;" width="40" height="34" viewBox="0 0 40 34"><g fill="#5f5f5f"><rect x="1" y="2" width="36.5" height="6.2" rx="1.5"/><rect x="1" y="14" width="36.5" height="6.2" rx="1.5"/><rect x="1" y="25.6" width="36.5" height="6.2" rx="1.5"/></g></svg>
<div style="position:absolute;left:776px;top:790px;width:1362px;height:748px;overflow:hidden">
<div style="position:absolute;left:72px;top:16px;width:1184px;height:72px;box-sizing:border-box;background:#f0f0f0;"></div>
<div style="position:absolute;left:201.5px;top:35.1px;font-size:41px;line-height:41px;color:#1f1f1f;white-space:pre;font-weight:700;letter-spacing:0.55px;">Quality</div>
<svg style="position:absolute;left:1182px;top:42.3px;" width="40" height="26" viewBox="0 0 40 26"><path d="M5.5 5.5L20 19.5 34.5 5.5" stroke="#5a5a5a" stroke-width="5" fill="none" stroke-linecap="round" stroke-linejoin="round"/></svg>
<svg style="position:absolute;left:103.8px;top:32.4px;" width="46" height="46" viewBox="0 0 46 46"><g fill="#222"><rect x="0" y="0" width="46" height="16.4"/><rect x="0" y="25.8" width="35" height="7.9"/><rect x="0" y="41.7" width="17.4" height="4"/></g></svg>
<div style="position:absolute;left:860.5px;top:97.1px;width:395px;height:71px;box-sizing:border-box;background:#fff;border:3px solid #bfbfbf;border-radius:6px;"></div>
<div style="position:absolute;left:96.0px;top:116.1px;font-size:34px;line-height:34px;color:#191919;white-space:pre;letter-spacing:0.04px;">Layer Height</div>
<div style="position:absolute;left:877.6px;top:116.1px;font-size:34px;line-height:34px;color:#191919;white-space:pre;letter-spacing:-0.80px;">0.12</div>
<div style="position:absolute;left:1180.0px;top:116.1px;font-size:34px;line-height:34px;color:#888;white-space:pre;">mm</div>
<svg style="position:absolute;left:784px;top:105px;" width="50" height="52" viewBox="0 0 50 52"><g stroke="#666" stroke-width="4.4" fill="none" transform="translate(25.55 27.25) scale(1.07) translate(-25.55 -27.25)"><g transform="translate(17 35.7) rotate(-45)"><rect x="-6.9" y="-5.4" width="13.8" height="10.8" rx="4.4"/></g><g transform="translate(34.1 18.8) rotate(-45)"><rect x="-6.9" y="-5.4" width="13.8" height="10.8" rx="4.4"/></g><path d="M19.8 32.9L30.6 21.9" stroke-linecap="round"/></g></svg>
<div style="position:absolute;left:72px;top:172px;width:1184px;height:72px;box-sizing:border-box;background:#f0f0f0;"></div>
<div style="position:absolute;left:202.5px;top:191.1px;font-size:41px;line-height:41px;color:#1f1f1f;white-space:pre;font-weight:700;letter-spacing:-0.85px;">Shell</div>
<svg style="position:absolute;left:1189px;top:191.4px;" width="26" height="40" viewBox="0 0 26 40"><path d="M20 5.5L6.5 20 20 34.5" stroke="#5a5a5a" stroke-width="5" fill="none" stroke-linecap="round" stroke-linejoin="round"/></svg>
<svg style="position:absolute;left:103.8px;top:187.6px;" width="46" height="46" viewBox="0 0 46 46"><g stroke="#222" stroke-width="2" fill="none" stroke-linejoin="miter"><path d="M6.4 1.1H40L34.1 15.8 45.3 45.2H1L12.8 15.8z"/><path d="M12.6 1.1l6.2 14.7L7.1 45.2M33 1.1l-5.4 14.7L39 45.2"/></g></svg>
<div style="position:absolute;left:72px;top:250px;width:1184px;height:72px;box-sizing:border-box;background:#f0f0f0;"></div>
<div style="position:absolute;left:200.2px;top:269.1px;font-size:41px;line-height:41px;color:#1f1f1f;white-space:pre;font-weight:700;transform:scaleX(1.1154);transform-origin:0 0;">Infill</div>
<svg style="position:absolute;left:1182px;top:276.3px;" width="40" height="26" viewBox="0 0 40 26"><path d="M5.5 5.5L20 19.5 34.5 5.5" stroke="#5a5a5a" stroke-width="5" fill="none" stroke-linecap="round" stroke-linejoin="round"/></svg>
<svg style="position:absolute;left:103.8px;top:265.6px;overflow:hidden;" width="46" height="46" viewBox="0 0 46 46"><g stroke="#222" stroke-width="1.6" fill="none"><rect x="0.9" y="0.9" width="44.2" height="44.2"/><path d="M11.96 0L46 34.04"/><path d="M31.28 0L46 14.72"/><path d="M0 7.82L9.43 17.25"/><path d="M0 27.6L18.4 46"/><path d="M28.75 36.34L38.41 46"/><path d="M26.45 0L0 26.45"/><path d="M38.64 7.36L28.75 17.25"/><path d="M46 18.86L18.86 46"/><path d="M8.97 36.57L0 45.54"/></g></svg>
<div style="position:absolute;left:860.5px;top:331px;width:395px;height:71px;box-sizing:border-box;background:#fff;border:3px solid #bfbfbf;border-radius:6px;"></div>
<div style="position:absolute;left:96.0px;top:350.0px;font-size:34px;line-height:34px;color:#191919;white-space:pre;letter-spacing:0.38px;">Infill Density</div>
<div style="position:absolute;left:876.3px;top:350.0px;font-size:34px;line-height:34px;color:#191919;white-space:pre;">20</div>
<div style="position:absolute;left:1211.3px;top:353.8px;font-size:29.5px;line-height:29.5px;color:#888;white-space:pre;">%</div>
<div style="position:absolute;left:860.5px;top:409.5px;width:395px;height:71px;box-sizing:border-box;background:#fff;border:3px solid #bfbfbf;border-radius:6px;"></div>
<div style="position:absolute;left:98.0px;top:428.5px;font-size:34px;line-height:34px;color:#191919;white-space:pre;font-style:italic;letter-spacing:-0.19px;">Infill Pattern</div>
<div style="position:absolute;left:877.6px;top:428.5px;font-size:34px;line-height:34px;color:#191919;white-space:pre;letter-spacing:-0.24px;">Triangles</div>
<svg style="position:absolute;left:1182px;top:433px;" width="40" height="26" viewBox="0 0 40 26"><path d="M5.5 5.5L20 19.5 34.5 5.5" stroke="#5a5a5a" stroke-width="5" fill="none" stroke-linecap="round" stroke-linejoin="round"/></svg>
<svg style="position:absolute;left:722px;top:423px;" width="46" height="44" viewBox="0 0 46 44"><path d="M10.2 12.7A15.75 15.75 0 1 1 23.2 37.35" stroke="#666" stroke-width="5.8" fill="none"/><path d="M3.1 6.9V24.7L18.2 15.6z" fill="#666"/></svg>
<svg style="position:absolute;left:790px;top:425px;" width="40" height="40" viewBox="0 0 40 40"><circle cx="19.6" cy="19.5" r="19.5" fill="#666"/><text x="8.6" y="31" font-family="Liberation Sans,sans-serif" font-style="italic" font-size="35" fill="#fff">f</text><text x="16.2" y="33" font-family="Liberation Sans,sans-serif" font-style="italic" font-size="23" fill="#fff">x</text></svg>
<div style="position:absolute;left:72px;top:484px;width:1184px;height:72px;box-sizing:border-box;background:#f0f0f0;"></div>
<div style="position:absolute;left:200.3px;top:503.1px;font-size:41px;line-height:41px;color:#1f1f1f;white-space:pre;font-weight:700;transform:scaleX(1.0826);transform-origin:0 0;">Material</div>
<svg style="position:absolute;left:1189px;top:503.4px;" width="26" height="40" viewBox="0 0 26 40"><path d="M20 5.5L6.5 20 20 34.5" stroke="#5a5a5a" stroke-width="5" fill="none" stroke-linecap="round" stroke-linejoin="round"/></svg>
<svg style="position:absolute;left:103.8px;top:496px;" width="47" height="54" viewBox="0 0 47 54"><g fill="#222"><rect x="0" y="0" width="5.1" height="45.9"/><rect x="41.2" y="0" width="5.1" height="45.9"/><rect x="10.2" y="4.1" width="3" height="38" rx="1.5"/><rect x="17.9" y="4.1" width="3" height="38" rx="1.5"/><rect x="25.6" y="4.1" width="3" height="49.4" rx="1.5"/><rect x="33.2" y="4.1" width="3" height="38" rx="1.5"/></g></svg>
<div style="position:absolute;left:72px;top:562px;width:1184px;height:72px;box-sizing:border-box;background:#f0f0f0;"></div>
<div style="position:absolute;left:202.5px;top:581.1px;font-size:41px;line-height:41px;color:#1f1f1f;white-space:pre;font-weight:700;transform:scaleX(0.9655);transform-origin:0 0;">Speed</div>
<svg style="position:absolute;left:1182px;top:588.3px;" width="40" height="26" viewBox="0 0 40 26"><path d="M5.5 5.5L20 19.5 34.5 5.5" stroke="#5a5a5a" stroke-width="5" fill="none" stroke-linecap="round" stroke-linejoin="round"/></svg>
<svg style="position:absolute;left:103.9px;top:577.9px;" width="46.2" height="46.2" viewBox="0 0 46.2 46.2"><g transform="translate(23.1 23.1)"><g stroke="#222" stroke-width="2" fill="none"><circle cx="0" cy="0" r="22.1"/><path d="M0-20.8V-15.5M-21.3 0h6M15.4 0h5.9M-10.7-17.9l2.9 4.5M10.6-17.9l-2.7 4.5M-18.2-10.5l4.6 2.5M18.3-10.5l-4.6 2.5"/></g><path d="M6.5-10.5L2.2 2.2A2.9 2.9 0 1 1-2.4-1.4z" fill="#222"/></g></svg>
<div style="position:absolute;left:860.5px;top:643.2px;width:395px;height:71px;box-sizing:border-box;background:#fff;border:3px solid #bfbfbf;border-radius:6px;"></div>
<div style="position:absolute;left:96.0px;top:662.2px;font-size:34px;line-height:34px;color:#191919;white-space:pre;letter-spacing:-0.14px;">Print Speed</div>
<div style="position:absolute;left:876.6px;top:662.2px;font-size:34px;line-height:34px;color:#191919;white-space:pre;letter-spacing:-0.47px;">50.0</div>
<div style="position:absolute;left:1149.4px;top:662.2px;font-size:34px;line-height:34px;color:#888;white-space:pre;transform:scaleX(1.0637);transform-origin:0 0;">mm/s</div>
<div style="position:absolute;left:72px;top:718px;width:1184px;height:72px;box-sizing:border-box;background:#f0f0f0;"></div>
<div style="position:absolute;left:203.5px;top:737.1px;font-size:41px;line-height:41px;color:#1f1f1f;white-space:pre;font-weight:700;">Travel</div>
<svg style="position:absolute;left:1189px;top:737.4px;" width="26" height="40" viewBox="0 0 26 40"><path d="M20 5.5L6.5 20 20 34.5" stroke="#5a5a5a" stroke-width="5" fill="none" stroke-linecap="round" stroke-linejoin="round"/></svg>
<svg style="position:absolute;left:129.8px;top:730.9px;" width="24" height="20" viewBox="0 0 24 20"><path d="M0 0h23.3v7.4Q19 13 14.5 16.2Q12 17.6 9 16.2Q4 13 0 7.4z" fill="#222"/></svg>
</div>
<div style="position:absolute;left:776px;top:1538px;width:1362px;height:3px;box-sizing:border-box;background:#bfbfbf;"></div>
<div style="position:absolute;left:2056px;top:806px;width:27px;height:489.5px;box-sizing:border-box;background:#0c0850;border-radius:14px;"></div>
<div style="position:absolute;left:812px;top:1577px;width:412px;height:92px;box-sizing:border-box;background:#f0f0f0;border-radius:5px;box-shadow:0 2px 0 #d2d2d2;height:90px;"></div>
<svg style="position:absolute;left:850px;top:1600px;" width="32" height="46" viewBox="0 0 32 46"><path d="M23 9.5L9.5 23 23 36.5" stroke="#1f60d6" stroke-width="5.2" fill="none" stroke-linecap="round" stroke-linejoin="round"/></svg>
<div style="position:absolute;left:900.8px;top:1603.3px;font-size:41px;line-height:41px;color:#2264d6;white-space:pre;letter-spacing:0.91px;">Recommended</div>
<div style="position:absolute;left:776px;top:1700px;width:1362px;height:3.5px;box-sizing:border-box;background:#bfbfbf;"></div>
<div style="position:absolute;left:776px;top:1703.5px;width:1362px;height:17.5px;box-sizing:border-box;background:#f0f0f0;border-radius:0 0 6px 6px;"></div>
<div style="position:absolute;left:1430.5px;top:1706.9px;width:9.6px;height:9.6px;box-sizing:border-box;background:#666;border-radius:5px;"></div>
<div style="position:absolute;left:1451.6px;top:1706.9px;width:9.6px;height:9.6px;box-sizing:border-box;background:#666;border-radius:5px;"></div>
<div style="position:absolute;left:1472.8px;top:1706.9px;width:9.6px;height:9.6px;box-sizing:border-box;background:#666;border-radius:5px;"></div>
<div style="position:absolute;left:1162px;top:1747.5px;width:934.5px;height:359px;box-sizing:border-box;background:#fff;border:3px solid #bfbfbf;border-radius:9px;"></div>
<svg style="position:absolute;left:1221px;top:1796px;" width="62" height="62" viewBox="0 0 62 62"><g stroke="#0c0850" fill="none"><circle cx="31" cy="31" r="26.8" stroke-width="4"/><path d="M31 12.5V31l10.5 10.3" stroke-width="3.8"/></g></svg>
<div style="position:absolute;left:1298.5px;top:1808.4px;font-size:41px;line-height:41px;color:#111;white-space:pre;font-weight:700;letter-spacing:0.14px;">2 hours 56 minutes</div>
<svg style="position:absolute;left:1228.8px;top:1884px;" width="47" height="54" viewBox="0 0 47 54"><g fill="#0c0850"><rect x="0" y="0" width="5.1" height="45.9"/><rect x="41.2" y="0" width="5.1" height="45.9"/><rect x="10.2" y="4.1" width="3" height="38" rx="1.5"/><rect x="17.9" y="4.1" width="3" height="38" rx="1.5"/><rect x="25.6" y="4.1" width="3" height="49.4" rx="1.5"/><rect x="33.2" y="4.1" width="3" height="38" rx="1.5"/></g></svg>
<div style="position:absolute;left:1297.6px;top:1895.9px;font-size:34px;line-height:34px;color:#191919;white-space:pre;letter-spacing:-0.49px;">14g · 4.67m</div>
<svg style="position:absolute;left:1976px;top:1797px;" width="60" height="60" viewBox="0 0 60 60"><circle cx="29.9" cy="29.9" r="29" fill="#0c0850"/><text x="21.5" y="46" font-family="Liberation Serif,serif" font-style="italic" font-weight="700" font-size="49" fill="#fff">i</text></svg>
<div style="position:absolute;left:1223.5px;top:1966.5px;width:235.5px;height:91px;box-sizing:border-box;background:#f0f0f0;border-radius:5px;box-shadow:0 2px 0 #d2d2d2;height:89px;"></div>
<div style="position:absolute;left:1266.8px;top:1991.8px;font-size:41px;line-height:41px;color:#2264d6;white-space:pre;letter-spacing:-0.03px;">Preview</div>
<div style="position:absolute;left:1495.3px;top:1966.2px;width:539.7px;height:91.6px;box-sizing:border-box;background:#2770e8;border-radius:5px;box-shadow:0 2px 0 #1f5fca;height:89.6px;"></div>
<div style="position:absolute;left:1658.9px;top:1991.8px;font-size:41px;line-height:41px;color:#fff;white-space:pre;letter-spacing:-0.57px;">Save to File</div>
</body></html>
